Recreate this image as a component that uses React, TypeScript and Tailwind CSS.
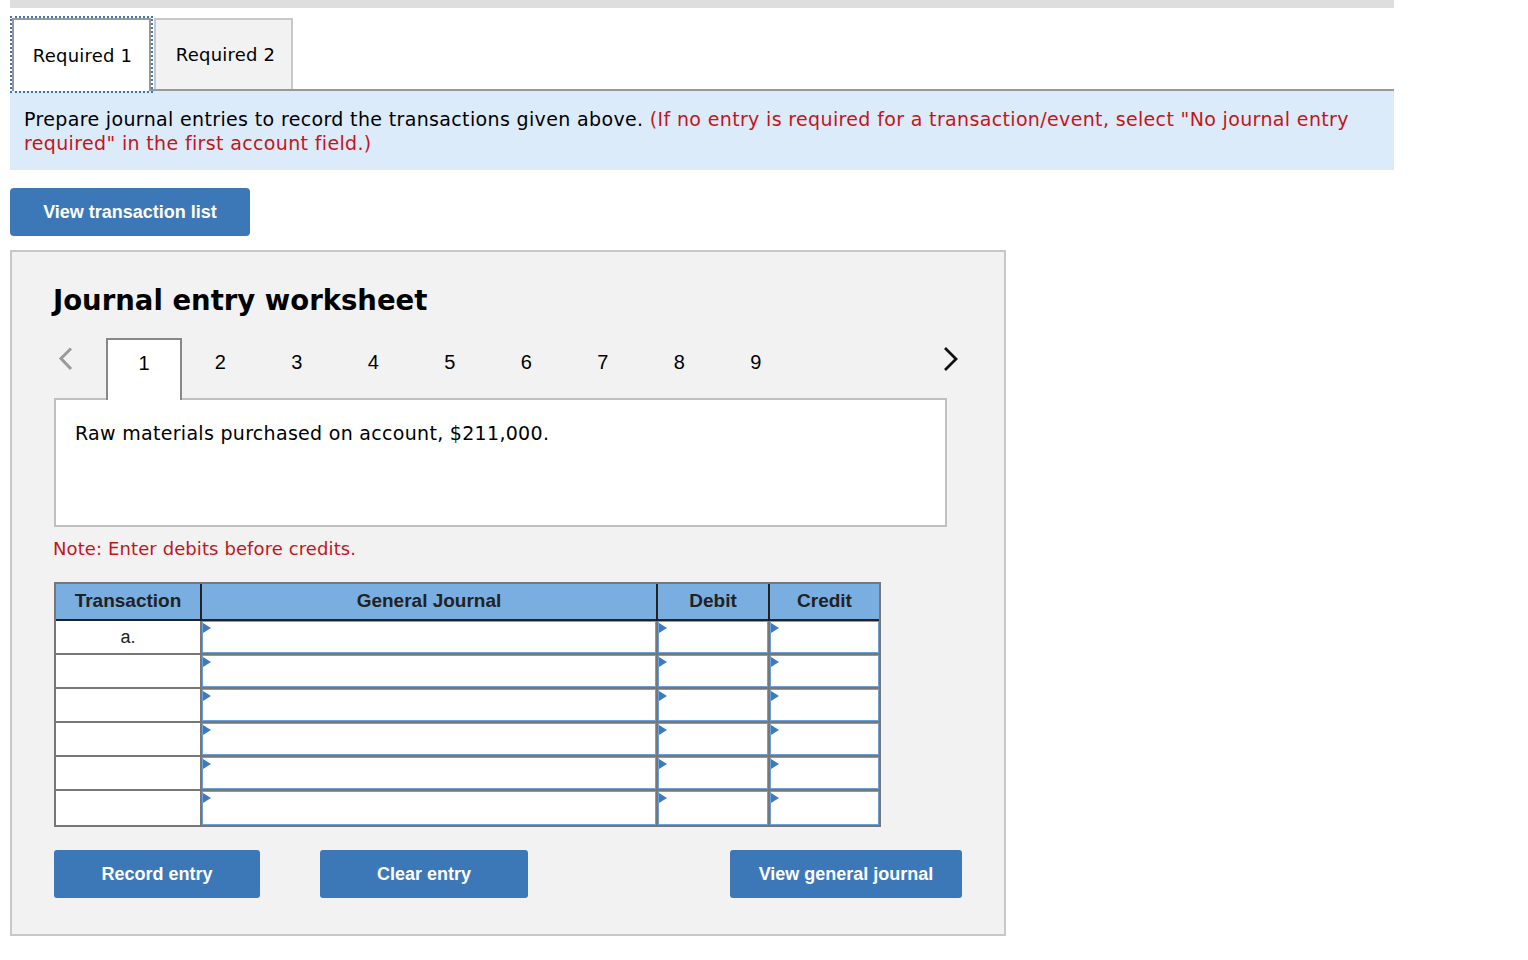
import React from "react";

const verdana = "font-['DejaVu_Sans',Verdana,sans-serif]";
const arial = "font-['Liberation_Sans',Arial,sans-serif]";

function InputCell({ w, last }: { w: string; last?: boolean }) {
  return (
    <div className={`${w} h-full ${last ? "" : "border-r-2"} border-[#777] bg-white`}>
      <div className="relative w-full h-full border-[1.5px] border-[#6d9fd9] bg-white">
        <svg className="absolute left-0 top-[1px]" width="8" height="10" viewBox="0 0 8 10">
          <polygon points="0,0 8,5 0,10" fill="#3d7bc0" />
        </svg>
      </div>
    </div>
  );
}

function Row({ label, last }: { label?: string; last?: boolean }) {
  return (
    <div className={`flex h-[34px] ${last ? "" : "border-b-2"} border-[#777]`}>
      <div className={`w-[146px] h-full border-r-2 border-[#777] bg-white flex items-center justify-center ${arial} text-[18px] text-[#222]`}>
        {label}
      </div>
      <InputCell w="w-[456px]" />
      <InputCell w="w-[112px]" />
      <InputCell w="w-[109px]" last />
    </div>
  );
}

export default function App() {
  const nums = [1, 2, 3, 4, 5, 6, 7, 8, 9];
  return (
    <div className="bg-white min-h-[960px] w-[1528px]">
      <div className="ml-[10px] w-[1384px]">
        <div className="h-[8px] bg-[#dedede]" />
        {/* Tabs */}
        <div className={`flex items-end mt-[10px] pl-[2px] ${verdana} text-[18px] tracking-[0.2px] text-black`}>
          <div className="w-[139px] h-[73px] border-2 border-b-0 border-[#999] bg-white outline-2 outline-dotted outline-[#3d78b7] flex items-center justify-center pl-[2px]">
            Required 1
          </div>
          <div className="flex-1 h-[73px] border-b-2 border-[#999] pl-[3px] flex items-end">
            <div className="w-[139px] h-[71px] border-2 border-b-0 border-[#c8c8c8] bg-[#f2f2f2] flex items-center justify-center pl-[4px]">
              Required 2
            </div>
          </div>
        </div>
        {/* Instructions */}
        <div className={`bg-[#dcebf9] pl-[14px] pr-[14px] pt-[16px] pb-[15px] ${verdana} text-[19px] tracking-[0.35px] leading-[24px] text-black`}>
          Prepare journal entries to record the transactions given above.{" "}
          <span className="text-[#c4141c]">
            (If no entry is required for a transaction/event, select "No journal entry required" in the first account field.)
          </span>
        </div>
        <button className={`mt-[18px] w-[240px] h-[48px] rounded-[4px] bg-[#3c78b8] text-white font-bold ${arial} text-[18px]`}>
          View transaction list
        </button>
        {/* Panel */}
        <div className="mt-[14px] w-[996px] h-[686px] border-2 border-[#c8c8c8] bg-[#f2f2f2] pl-[42px] pt-[30px]">
          <h1 className={`${verdana} font-bold text-[27.5px] leading-[36px] text-black -ml-[1px]`}>
            Journal entry worksheet
          </h1>
          {/* nav */}
          <div className="flex items-start h-[60px] mt-[20px] w-[905px]">
            <div className="w-[52px] h-full">
              <svg width="16" height="24" viewBox="0 0 16 24" className="ml-[4px] mt-[9px]">
                <polyline points="13,1.5 3,11.5 13,22" fill="none" stroke="#9a9a9a" strokeWidth="3" />
              </svg>
            </div>
            {nums.map((n) =>
              n === 1 ? (
                <div
                  key={n}
                  className={`relative z-10 w-[76px] h-[62px] border-2 border-b-0 border-[#888] bg-white flex items-center justify-center ${arial} text-[20px] text-black pb-[14px]`}
                >
                  {n}
                </div>
              ) : (
                <div key={n} className={`w-[76.5px] h-[60px] flex items-center justify-center ${arial} text-[20px] text-black pb-[12px]`}>
                  {n}
                </div>
              )
            )}
            <div className="flex-1" />
            <div className="h-full">
              <svg width="16" height="26" viewBox="0 0 16 26" className="mt-[8px]">
                <polyline points="2,2 13,13 2,24" fill="none" stroke="#111" strokeWidth="2.8" />
              </svg>
            </div>
          </div>
          {/* description box */}
          <div className={`w-[893px] h-[129px] border-2 border-[#c0c0c0] bg-white pl-[19px] pt-[21px] ${verdana} text-[19px] tracking-[0.3px] leading-[24px] text-black`}>
            Raw materials purchased on account, $211,000.
          </div>
          <div className={`mt-[12px] ${verdana} text-[18px] tracking-[0.1px] text-[#c4141c] leading-[20px] -ml-[1px]`}>
            Note: Enter debits before credits.
          </div>
          {/* table */}
          <div className="mt-[23px] w-[827px] border-2 border-[#777]">
            <div className={`flex h-[37px] bg-[#7aade0] border-b-2 border-[#222] ${arial} font-bold text-[19px] text-[#222]`}>
              <div className="w-[146px] h-full border-r-2 border-[#222] flex items-center justify-center">Transaction</div>
              <div className="w-[456px] h-full border-r-2 border-[#222] flex items-center justify-center">General Journal</div>
              <div className="w-[112px] h-full border-r-2 border-[#222] flex items-center justify-center">Debit</div>
              <div className="w-[109px] h-full flex items-center justify-center">Credit</div>
            </div>
            <Row label="a." />
            <Row />
            <Row />
            <Row />
            <Row />
            <Row last />
          </div>
          {/* buttons */}
          <div className={`flex mt-[23px] ${arial} font-bold text-[18px] text-white`}>
            <button className="w-[206px] h-[48px] rounded-[3px] bg-[#3c78b8]">Record entry</button>
            <button className="ml-[60px] w-[208px] h-[48px] rounded-[3px] bg-[#3c78b8]">Clear entry</button>
            <button className="ml-[202px] w-[232px] h-[48px] rounded-[3px] bg-[#3c78b8]">View general journal</button>
          </div>
        </div>
      </div>
    </div>
  );
}
